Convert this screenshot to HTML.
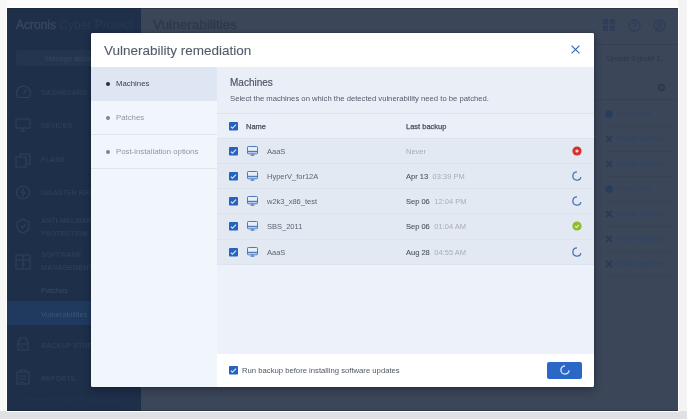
<!DOCTYPE html>
<html><head><meta charset="utf-8">
<style>
*{box-sizing:border-box;margin:0;padding:0}
html,body{width:687px;height:419px;overflow:hidden}
body{position:relative;background:#fbfbfb;font-family:"Liberation Sans",sans-serif}
.abs{position:absolute}
i{display:block}
#lstrip{left:0;top:0;width:7px;height:419px;background:#f7f7f6}
#rstrip{left:678px;top:0;width:9px;height:419px;background:#f4f4f5}
#tstrip{left:0;top:0;width:687px;height:8px;background:#fbfbfb}
#bband{left:0;top:411px;width:687px;height:8px;background:#e0e1e4}
#app{left:7px;top:8px;width:671px;height:403px;background:#3b4659;overflow:hidden;outline:1px solid #fff}
#app:after{content:"";position:absolute;left:0;top:0;right:0;bottom:0;box-shadow:inset 0 1px 0 rgba(20,28,40,0.35),inset 0 -1px 0 rgba(20,28,40,0.35);pointer-events:none}
#side{left:0;top:0;width:134px;height:403px;background:#1e2f4a}
.st{position:absolute;left:34px;font-size:7.1px;line-height:8px;color:#2d3d55;font-weight:bold;letter-spacing:0;white-space:nowrap}
.ic{position:absolute;left:8px}
#modal{left:91px;top:33px;width:503px;height:354px;background:#fff;border-radius:2px;overflow:hidden;box-shadow:0 0 3px rgba(10,15,25,0.3),0 4px 8px rgba(10,15,25,0.3)}
#mh{left:0;top:0;width:503px;height:34px;background:#fff}
#nav{left:0;top:34px;width:126px;height:320px;background:#f1f5fc}
.ni{position:absolute;left:0;width:126px;height:34px;border-bottom:1px solid #e0e6ef;font-size:7.8px;line-height:8px;color:#92979f}
.ni .b{position:absolute;left:15px;top:15px;width:4px;height:4px;border-radius:50%;background:#7e8491}
.ni span{position:absolute;left:25px;top:13px;white-space:nowrap}
#cont{left:126px;top:34px;width:377px;height:287px;background:#edf2fa}
#foot{left:126px;top:321px;width:377px;height:33px;background:#fff}
.row{position:absolute;left:0;width:377px;height:25px;border-top:1px solid #dce3ec;background:#e3e9f3}
.cb{position:absolute;width:9px;height:9px}
.tx{position:absolute;font-size:7.5px;line-height:8px;white-space:nowrap}
.row .cb{left:12px;top:7.6px}
.row .mon{position:absolute;left:30px;top:7.2px}
.row .nm{left:50px;top:9px;color:#5d6470}
.row .dt{left:189px;top:9px;color:#4f5560;-webkit-text-stroke:0.1px #4f5560}
.row .tm{color:#a8aeb8;-webkit-text-stroke:0;margin-left:4.5px}
.row .st2{position:absolute;left:355px;top:7px}
.bl{position:absolute;left:591px;width:80px;font-size:7.7px;line-height:8px;color:#314463;white-space:nowrap}
.bi{position:absolute;left:598px;width:8px;height:8px}
</style></head><body><div id="wrap" style="position:absolute;left:0;top:0;width:687px;height:419px;filter:blur(0.3px)">
<div id="tstrip" class="abs"></div><div id="lstrip" class="abs"></div><div id="rstrip" class="abs"></div>
<div id="bband" class="abs"></div>
<div id="app" class="abs">
  <!-- top bar -->
  <div class="abs" style="left:146px;top:9px;font-size:13.6px;line-height:15px;color:#2e394b;-webkit-text-stroke:0.3px #2e394b;white-space:nowrap">Vulnerabilities</div>
  <svg class="abs" style="left:596px;top:11px" width="12" height="12" viewBox="0 0 12 12" fill="#303d58"><rect x="0" y="0" width="5.2" height="5.2" rx="0.8"/><rect x="6.8" y="0" width="5.2" height="5.2" rx="0.8"/><rect x="0" y="6.8" width="5.2" height="5.2" rx="0.8"/><rect x="6.8" y="6.8" width="5.2" height="5.2" rx="0.8"/></svg>
  <svg class="abs" style="left:621px;top:11px" width="13" height="13" viewBox="0 0 13 13" fill="none" stroke="#303d57" stroke-width="1.2"><circle cx="6.5" cy="6.5" r="5.6"/><path d="M4.8 5.2a1.8 1.8 0 1 1 2.4 1.6c-.5.2-.7.5-.7 1v.5M6.5 9.6v.6"/></svg>
  <svg class="abs" style="left:646px;top:11px" width="13" height="13" viewBox="0 0 13 13" fill="none" stroke="#303d57" stroke-width="1.2"><circle cx="6.5" cy="6.5" r="5.6"/><circle cx="6.5" cy="5" r="2" fill="#33426a"/><path d="M2.8 10.5c1-1.5 2.2-2.2 3.7-2.2s2.7.7 3.7 2.2"/></svg>
  <div class="abs" style="left:134px;top:36px;width:537px;height:1px;background:#354053"></div>
  <div class="abs" style="left:600px;top:47px;font-size:7px;color:#2d3849;white-space:nowrap">Update 3 (build 1...</div>
  <svg class="abs" style="left:650px;top:75px" width="9" height="9" viewBox="0 0 9 9"><circle cx="4.5" cy="4.5" r="3.8" fill="#2e394b"/><circle cx="4.5" cy="4.5" r="1.4" fill="#3b4659"/></svg>
  <div class="abs" style="left:587px;top:91px;width:84px;height:1px;background:#364154"></div>
  <!-- background list rows -->
  <div class="abs" style="left:600px;top:118px;width:66px;height:1px;background:#374255"></div><div class="abs" style="left:600px;top:143px;width:66px;height:1px;background:#374255"></div><div class="abs" style="left:600px;top:168px;width:66px;height:1px;background:#374255"></div><div class="abs" style="left:600px;top:193px;width:66px;height:1px;background:#374255"></div><div class="abs" style="left:600px;top:218px;width:66px;height:1px;background:#374255"></div><div class="abs" style="left:600px;top:243px;width:66px;height:1px;background:#374255"></div><div class="abs" style="left:600px;top:268px;width:66px;height:1px;background:#374255"></div>
  <svg class="bi" style="top:102px" viewBox="0 0 8 8"><circle cx="4" cy="4" r="3.8" fill="#283c60"/></svg><div class="bl" style="left:610px;top:102px">How to fix</div>
  <svg class="bi" style="top:127px" viewBox="0 0 8 8"><path d="M1.2 1.2l5.6 5.6M6.8 1.2L1.2 6.8" stroke="#2a3b5a" stroke-width="1.8"/></svg><div class="bl" style="left:610px;top:127px">Install patches</div>
  <svg class="bi" style="top:152px" viewBox="0 0 8 8"><path d="M1.2 1.2l5.6 5.6M6.8 1.2L1.2 6.8" stroke="#2a3b5a" stroke-width="1.8"/></svg><div class="bl" style="left:610px;top:152px">Install patches</div>
  <svg class="bi" style="top:177px" viewBox="0 0 8 8"><circle cx="4" cy="4" r="3.8" fill="#283c60"/></svg><div class="bl" style="left:610px;top:177px">How to fix</div>
  <svg class="bi" style="top:202px" viewBox="0 0 8 8"><path d="M1.2 1.2l5.6 5.6M6.8 1.2L1.2 6.8" stroke="#2a3b5a" stroke-width="1.8"/></svg><div class="bl" style="left:610px;top:202px">Install patches</div>
  <svg class="bi" style="top:227px" viewBox="0 0 8 8"><path d="M1.2 1.2l5.6 5.6M6.8 1.2L1.2 6.8" stroke="#2a3b5a" stroke-width="1.8"/></svg><div class="bl" style="left:610px;top:227px">Install patches</div>
  <svg class="bi" style="top:252px" viewBox="0 0 8 8"><path d="M1.2 1.2l5.6 5.6M6.8 1.2L1.2 6.8" stroke="#2a3b5a" stroke-width="1.8"/></svg><div class="bl" style="left:610px;top:252px">Install patches</div>

  <div id="side" class="abs">
    <div class="abs" style="left:9px;top:10px;font-size:12px;line-height:14px;color:#3a485d;white-space:nowrap"><span style="-webkit-text-stroke:0.35px #3a485d">Acronis</span> <span style="color:#273852">Cyber Protect</span></div>
    <div class="abs" style="left:9px;top:42px;width:118px;height:16px;background:#23354f;border-radius:2px"></div>
    <div class="abs" style="left:38px;top:47px;font-size:7.5px;line-height:8px;color:#35445b;-webkit-text-stroke:0.2px #35445b;white-space:nowrap">Manage account</div>

    <svg class="ic" style="top:77px" width="17" height="14" viewBox="0 0 17 14" fill="none" stroke="#2f405a" stroke-width="1.2"><path d="M3 12.5A7 7 0 1 1 14 12.5Z"/><path d="M8.5 8.5l3-3.5"/></svg>
    <div class="st" style="top:81px">DASHBOARD</div>
    <svg class="ic" style="top:110px" width="17" height="14" viewBox="0 0 17 14" fill="none" stroke="#2f405a" stroke-width="1.2"><rect x="1" y="1" width="14" height="9"/><path d="M5 13h6M8 10v3"/></svg>
    <div class="st" style="top:114px">DEVICES</div>
    <svg class="ic" style="top:145px" width="17" height="15" viewBox="0 0 17 15" fill="none" stroke="#2f405a" stroke-width="1.2"><rect x="1" y="4" width="10" height="10"/><path d="M5 4V1h10v10h-4"/></svg>
    <div class="st" style="top:148px">PLANS</div>
    <svg class="ic" style="top:176.5px" width="17" height="15" viewBox="0 0 17 15" fill="none" stroke="#2f405a" stroke-width="1.2"><circle cx="8" cy="7.5" r="6.5"/><path d="M9 3.5L6.5 8h3l-2 3.5"/></svg>
    <div class="st" style="top:181px">DISASTER RECOVERY</div>
    <svg class="ic" style="top:210px" width="17" height="16" viewBox="0 0 17 16" fill="none" stroke="#2f405a" stroke-width="1.2"><path d="M8 1l6 3v4c0 4-3 6-6 7-3-1-6-3-6-7V4z"/><path d="M5.5 8l2 2 3-3.5"/></svg>
    <div class="st" style="top:209px">ANTI-MALWARE</div>
    <div class="st" style="top:222px">PROTECTION</div>
    <svg class="ic" style="top:245.5px" width="17" height="16" viewBox="0 0 17 16" fill="none" stroke="#2f405a" stroke-width="1.2"><rect x="1" y="1" width="14" height="14"/><path d="M8 1v14M1 6h14M8 8v4M6 10h4"/></svg>
    <div class="st" style="top:243px">SOFTWARE</div>
    <div class="st" style="top:256px">MANAGEMENT</div>
    <div class="st" style="top:279px;letter-spacing:0;font-size:7.5px;font-weight:normal;color:#3a4a63">Patches</div>
    <div class="abs" style="left:0;top:293px;width:134px;height:24px;background:#1f3a5e"></div>
    <div class="st" style="top:303px;letter-spacing:0;font-size:7.5px;font-weight:normal;color:#3d5272">Vulnerabilities</div>
    <svg class="ic" style="top:329px" width="17" height="15" viewBox="0 0 17 15" fill="none" stroke="#2f405a" stroke-width="1.2"><path d="M3 6l2-5h6l2 5v7H3z"/><path d="M3 7h10M5 10h3"/></svg>
    <div class="st" style="top:334px">BACKUP STORAGE</div>
    <svg class="ic" style="top:361px" width="17" height="16" viewBox="0 0 17 16" fill="none" stroke="#2f405a" stroke-width="1.2"><rect x="2" y="3" width="12" height="12"/><path d="M5 3V1h6v2M4.5 7h7M4.5 10h7M4.5 13h5"/></svg>
    <div class="st" style="top:367px">REPORTS</div>
    <div class="abs" style="left:19px;top:388px;font-size:6px;line-height:7px;color:#25364f;white-space:nowrap">Powered by Acronis AnyData Engine</div>
  </div>
</div>

<div id="modal" class="abs">
  <div id="mh" class="abs">
    <div class="abs" style="left:13px;top:11px;font-size:13.5px;line-height:14px;color:#555b69;-webkit-text-stroke:0.1px #555b69;white-space:nowrap">Vulnerability remediation</div>
    <svg class="abs" style="left:479.7px;top:12.3px" width="9" height="9" viewBox="0 0 9 9"><path d="M0.6 0.6l7.8 7.8M8.4 0.6L0.6 8.4" stroke="#3d6db3" stroke-width="1.3"/></svg>
  </div>
  <div id="nav" class="abs">
    <div class="ni" style="top:0;background:#dde6f2"><i class="b" style="background:#2b2f3a"></i><span style="color:#3d4250">Machines</span></div>
    <div class="ni" style="top:34px"><i class="b"></i><span>Patches</span></div>
    <div class="ni" style="top:68px"><i class="b"></i><span>Post-installation options</span></div>
  </div>
  <div id="cont" class="abs">
    <div class="abs" style="left:0;top:0;width:377px;height:46px;background:#e9eef7"></div>
    <div class="abs" style="left:13px;top:10px;font-size:10px;line-height:11px;color:#4a5163;-webkit-text-stroke:0.15px #4a5163;white-space:nowrap">Machines</div>
    <div class="abs" style="left:13px;top:28px;font-size:7.7px;line-height:8px;color:#555c6a;white-space:nowrap">Select the machines on which the detected vulnerability need to be patched.</div>
    <div class="row" style="top:46px;background:#ebf0f8">
      <svg class="cb" width="9" height="9" viewBox="0 0 9 9"><rect x="0" y="0" width="9" height="8.6" rx="1" fill="#2762bc"/><path d="M1.9 4.7L3.5 6.2L7 2.6" fill="none" stroke="#d2e2f7" stroke-width="1.25"/></svg>
      <div class="tx" style="left:29px;top:9px;color:#4a505c;-webkit-text-stroke:0.25px #4a505c">Name</div>
      <div class="tx" style="left:189px;top:9px;color:#4a505c;-webkit-text-stroke:0.25px #4a505c">Last backup</div>
    </div>
    <div class="row" style="top:71px">
      <svg class="cb" width="9" height="9" viewBox="0 0 9 9"><rect x="0" y="0" width="9" height="8.6" rx="1" fill="#2762bc"/><path d="M1.9 4.7L3.5 6.2L7 2.6" fill="none" stroke="#d2e2f7" stroke-width="1.25"/></svg><svg class="mon" width="11" height="10" viewBox="0 0 11 10"><rect x="0.5" y="0.5" width="10" height="7.3" rx="0.8" fill="#e8eef7" stroke="#4d7bbd" stroke-width="1"/><rect x="0.5" y="4.8" width="10" height="1.5" fill="#4d7bbd"/><path d="M5.5 7.8v0.9" stroke="#4d7bbd" stroke-width="1.2"/><rect x="3.6" y="8.6" width="3.8" height="1.2" rx="0.4" fill="#4d7bbd"/></svg>
      <div class="tx nm">AaaS</div>
      <div class="tx dt" style="color:#a8aeb8;-webkit-text-stroke:0">Never</div>
      <svg class="st2" width="10" height="10" viewBox="0 0 10 10"><circle cx="5" cy="5" r="4.6" fill="#d8312c"/><circle cx="5" cy="5" r="1.6" fill="#fbd7d6"/></svg>
    </div>
    <div class="row" style="top:96px">
      <svg class="cb" width="9" height="9" viewBox="0 0 9 9"><rect x="0" y="0" width="9" height="8.6" rx="1" fill="#2762bc"/><path d="M1.9 4.7L3.5 6.2L7 2.6" fill="none" stroke="#d2e2f7" stroke-width="1.25"/></svg><svg class="mon" width="11" height="10" viewBox="0 0 11 10"><rect x="0.5" y="0.5" width="10" height="7.3" rx="0.8" fill="#e8eef7" stroke="#4d7bbd" stroke-width="1"/><rect x="0.5" y="4.8" width="10" height="1.5" fill="#4d7bbd"/><path d="M5.5 7.8v0.9" stroke="#4d7bbd" stroke-width="1.2"/><rect x="3.6" y="8.6" width="3.8" height="1.2" rx="0.4" fill="#4d7bbd"/></svg>
      <div class="tx nm">HyperV_for12A</div>
      <div class="tx dt">Apr 13<span class="tm">03:39 PM</span></div>
      <svg class="st2" width="10" height="10" viewBox="0 0 10 10"><path d="M5 0.9A4.1 4.1 0 1 0 8.96 6.06" fill="none" stroke="#4a75b3" stroke-width="1.3"/></svg>
    </div>
    <div class="row" style="top:121px">
      <svg class="cb" width="9" height="9" viewBox="0 0 9 9"><rect x="0" y="0" width="9" height="8.6" rx="1" fill="#2762bc"/><path d="M1.9 4.7L3.5 6.2L7 2.6" fill="none" stroke="#d2e2f7" stroke-width="1.25"/></svg><svg class="mon" width="11" height="10" viewBox="0 0 11 10"><rect x="0.5" y="0.5" width="10" height="7.3" rx="0.8" fill="#e8eef7" stroke="#4d7bbd" stroke-width="1"/><rect x="0.5" y="4.8" width="10" height="1.5" fill="#4d7bbd"/><path d="M5.5 7.8v0.9" stroke="#4d7bbd" stroke-width="1.2"/><rect x="3.6" y="8.6" width="3.8" height="1.2" rx="0.4" fill="#4d7bbd"/></svg>
      <div class="tx nm">w2k3_x86_test</div>
      <div class="tx dt">Sep 06<span class="tm">12:04 PM</span></div>
      <svg class="st2" width="10" height="10" viewBox="0 0 10 10"><path d="M5 0.9A4.1 4.1 0 1 0 8.96 6.06" fill="none" stroke="#4a75b3" stroke-width="1.3"/></svg>
    </div>
    <div class="row" style="top:146px;height:26px">
      <svg class="cb" width="9" height="9" viewBox="0 0 9 9"><rect x="0" y="0" width="9" height="8.6" rx="1" fill="#2762bc"/><path d="M1.9 4.7L3.5 6.2L7 2.6" fill="none" stroke="#d2e2f7" stroke-width="1.25"/></svg><svg class="mon" width="11" height="10" viewBox="0 0 11 10"><rect x="0.5" y="0.5" width="10" height="7.3" rx="0.8" fill="#e8eef7" stroke="#4d7bbd" stroke-width="1"/><rect x="0.5" y="4.8" width="10" height="1.5" fill="#4d7bbd"/><path d="M5.5 7.8v0.9" stroke="#4d7bbd" stroke-width="1.2"/><rect x="3.6" y="8.6" width="3.8" height="1.2" rx="0.4" fill="#4d7bbd"/></svg>
      <div class="tx nm">SBS_2011</div>
      <div class="tx dt">Sep 06<span class="tm">01:04 AM</span></div>
      <svg class="st2" width="10" height="10" viewBox="0 0 10 10"><circle cx="5" cy="5" r="4.6" fill="#8dbd2a"/><path d="M3 5.2l1.4 1.3L7 3.8" fill="none" stroke="#e8f3d0" stroke-width="1.1"/></svg>
    </div>
    <div class="row" style="top:172px;border-bottom:1px solid #dce3ec;height:26px">
      <svg class="cb" width="9" height="9" viewBox="0 0 9 9"><rect x="0" y="0" width="9" height="8.6" rx="1" fill="#2762bc"/><path d="M1.9 4.7L3.5 6.2L7 2.6" fill="none" stroke="#d2e2f7" stroke-width="1.25"/></svg><svg class="mon" width="11" height="10" viewBox="0 0 11 10"><rect x="0.5" y="0.5" width="10" height="7.3" rx="0.8" fill="#e8eef7" stroke="#4d7bbd" stroke-width="1"/><rect x="0.5" y="4.8" width="10" height="1.5" fill="#4d7bbd"/><path d="M5.5 7.8v0.9" stroke="#4d7bbd" stroke-width="1.2"/><rect x="3.6" y="8.6" width="3.8" height="1.2" rx="0.4" fill="#4d7bbd"/></svg>
      <div class="tx nm">AaaS</div>
      <div class="tx dt">Aug 28<span class="tm">04:55 AM</span></div>
      <svg class="st2" width="10" height="10" viewBox="0 0 10 10"><path d="M5 0.9A4.1 4.1 0 1 0 8.96 6.06" fill="none" stroke="#4a75b3" stroke-width="1.3"/></svg>
    </div>
  </div>
  <div id="foot" class="abs">
    <svg class="cb" style="left:12px;top:12px" width="9" height="9" viewBox="0 0 9 9"><rect x="0" y="0" width="9" height="8.6" rx="1" fill="#2762bc"/><path d="M1.9 4.7L3.5 6.2L7 2.6" fill="none" stroke="#d2e2f7" stroke-width="1.25"/></svg>
    <div class="tx" style="left:25px;top:13px;font-size:7.7px;color:#4f5664">Run backup before installing software updates</div>
    <div class="abs" style="left:330px;top:8px;width:35px;height:17px;background:#2a67c6;border-radius:2px"></div>
    <svg class="abs" style="left:343px;top:11px" width="10" height="10" viewBox="0 0 10 10"><path d="M5 0.9A4.1 4.1 0 1 0 9.1 5.4" fill="none" stroke="#c9ddf6" stroke-width="1.5"/></svg>
  </div>
</div>
</div></body></html>
